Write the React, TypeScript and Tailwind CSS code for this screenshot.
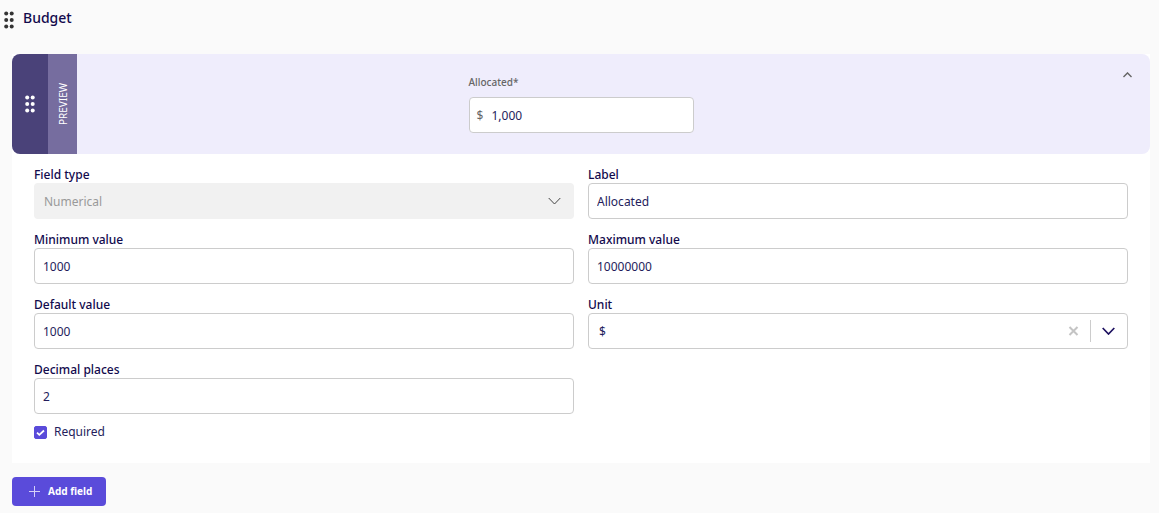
import { useState } from 'react';
import type { ReactNode } from 'react';

const inputClass =
  'block h-9 w-full rounded border border-[#cccccc] bg-white px-2 pt-px text-xs text-[#251d5c] focus:outline-none focus:ring-1 focus:ring-[#5a4bda]';

function DragHandle({ className }: { className?: string }) {
  return (
    <svg width="10" height="18" viewBox="0 0 10 18" fill="currentColor" className={className} aria-hidden="true">
      {[2.5, 9, 15.5].map((y) => (
        <g key={y}>
          <circle cx="2.2" cy={y} r="2" />
          <circle cx="7.7" cy={y} r="2" />
        </g>
      ))}
    </svg>
  );
}

function Chevron({ className }: { className: string }) {
  return (
    <svg viewBox="0 0 13 8" fill="none" stroke="currentColor" className={className} aria-hidden="true">
      <path d="M0.7 1L6.5 7L12.3 1" />
    </svg>
  );
}

function Field({ id, label, children }: { id: string; label: string; children: ReactNode }) {
  return (
    <div>
      <label htmlFor={id} className="block pt-px text-xs leading-4 font-medium">
        {label}
      </label>
      {children}
    </div>
  );
}

export default function App() {
  const [label, setLabel] = useState('Allocated');
  const [minimum, setMinimum] = useState('1000');
  const [maximum, setMaximum] = useState('10000000');
  const [defaultValue, setDefaultValue] = useState('1000');
  const [decimals, setDecimals] = useState('2');
  const [unit, setUnit] = useState('$');
  const [required, setRequired] = useState(true);
  const [open, setOpen] = useState(true);

  return (
    <div className="min-h-screen bg-[#fafafa] font-['Noto_Sans',sans-serif] text-[#120a4d]">
      {/* Section title */}
      <header className="flex h-10 items-center gap-[9px] pl-1">
        <DragHandle className="text-[#333333]" />
        <h2 className="pb-1 text-sm leading-5 font-medium">Budget</h2>
      </header>

      <main className="pt-3.5 pr-[9px] pb-[7px] pl-3">
        <section className="bg-white">
          {/* Preview banner */}
          <div className="grid h-25 grid-cols-[1fr_auto_1fr] overflow-hidden rounded-lg bg-[#efedfc]">
            <div className="flex">
              <div className="flex w-9 items-center justify-center bg-[#4a4279] text-white">
                <DragHandle />
              </div>
              <div className="flex w-[29px] items-center justify-center bg-[#766d9f]">
                <span className="rotate-180 text-[10px] leading-4 text-white [writing-mode:vertical-rl]">PREVIEW</span>
              </div>
            </div>

            <div className="w-[225px] pt-5">
              <label htmlFor="preview" className="block text-[10px] leading-4 font-medium text-[#666666]">
                {label}
                {required && '*'}
              </label>
              <div className="mt-[7px] flex h-9 items-center rounded border border-[#cccccc] bg-white pt-px pl-[7px] text-xs">
                <span className="w-[15px] shrink-0 text-[#666666]">{unit}</span>
                <input id="preview" defaultValue="1,000" className="w-full min-w-0 text-[#251d5c] focus:outline-none" />
              </div>
            </div>

            <div className="flex items-start justify-end pt-3.5 pr-3.5">
              <button
                type="button"
                aria-label="Toggle field"
                aria-expanded={open}
                onClick={() => setOpen(!open)}
                className="p-1"
              >
                <Chevron className="h-[6px] w-[9px] rotate-180 stroke-2 text-[#666666]" />
              </button>
            </div>
          </div>

          {/* Field settings */}
          {open && (
            <form className="px-[22px] pt-3 pb-[23px]">
              <div className="grid grid-cols-2 gap-x-3.5 gap-y-3">
                <Field id="type" label="Field type">
                  <div className="relative">
                    <select
                      id="type"
                      disabled
                      className="block h-9 w-full appearance-none rounded bg-[#f1f1f1] px-2.5 pt-px text-xs text-[#999999] opacity-100"
                    >
                      <option>Numerical</option>
                    </select>
                    <Chevron className="pointer-events-none absolute top-3.5 right-[13px] h-2 w-[13px] text-[#444444]" />
                  </div>
                </Field>
                <Field id="label" label="Label">
                  <input id="label" value={label} onChange={(e) => setLabel(e.target.value)} className={inputClass} />
                </Field>
                <Field id="minimum" label="Minimum value">
                  <input id="minimum" value={minimum} onChange={(e) => setMinimum(e.target.value)} className={inputClass} />
                </Field>
                <Field id="maximum" label="Maximum value">
                  <input id="maximum" value={maximum} onChange={(e) => setMaximum(e.target.value)} className={inputClass} />
                </Field>
                <Field id="default" label="Default value">
                  <input
                    id="default"
                    value={defaultValue}
                    onChange={(e) => setDefaultValue(e.target.value)}
                    className={inputClass}
                  />
                </Field>
                <Field id="unit" label="Unit">
                  <div className="relative">
                    <select
                      id="unit"
                      value={unit}
                      onChange={(e) => setUnit(e.target.value)}
                      className="block h-9 w-full appearance-none rounded border border-[#cccccc] bg-white px-2.5 pt-px text-xs text-[#251d5c]"
                    >
                      <option value="" />
                      <option value="$">$</option>
                      <option value="€">€</option>
                    </select>
                    <div className="pointer-events-none absolute inset-y-0 right-[13px] flex items-center gap-[11px]">
                      <button
                        type="button"
                        aria-label="Clear unit"
                        onClick={() => setUnit('')}
                        className="pointer-events-auto"
                      >
                        <svg width="11" height="10" viewBox="0 0 11 10" stroke="#c4c4c4" strokeWidth="2" aria-hidden="true">
                          <path d="M1.5 1L9.5 9M9.5 1L1.5 9" />
                        </svg>
                      </button>
                      <span className="h-[22px] w-px bg-[#cccccc]" />
                      <Chevron className="h-2 w-[13px] stroke-[1.7] text-[#1d1160]" />
                    </div>
                  </div>
                </Field>
                <Field id="decimals" label="Decimal places">
                  <input id="decimals" value={decimals} onChange={(e) => setDecimals(e.target.value)} className={inputClass} />
                </Field>
              </div>

              <label className="mt-2.5 flex w-fit items-center gap-[7px] text-xs leading-4 text-[#251d5c]">
                <span className="relative flex">
                  <input
                    type="checkbox"
                    checked={required}
                    onChange={(e) => setRequired(e.target.checked)}
                    className="peer size-[13px] appearance-none rounded-[2px] border border-[#5a4bda] bg-white checked:bg-[#5a4bda]"
                  />
                  <svg
                    viewBox="0 0 13 13"
                    fill="none"
                    stroke="white"
                    strokeWidth="1.8"
                    className="pointer-events-none absolute inset-0 hidden peer-checked:block"
                    aria-hidden="true"
                  >
                    <path d="M3 6.7L5.3 8.8L10 4.5" />
                  </svg>
                </span>
                Required
              </label>
            </form>
          )}
        </section>

        <button
          type="button"
          className="mt-3.5 flex h-[29px] items-center gap-2 rounded bg-[#5a4bda] pr-3.5 pl-[17px] text-[10px] font-bold text-white hover:bg-[#4c3fc4]"
        >
          <svg width="11" height="11" viewBox="0 0 11 11" stroke="#d5d0f7" aria-hidden="true">
            <path d="M5.5 0V11M0 5.5H11" />
          </svg>
          Add field
        </button>
      </main>
    </div>
  );
}
